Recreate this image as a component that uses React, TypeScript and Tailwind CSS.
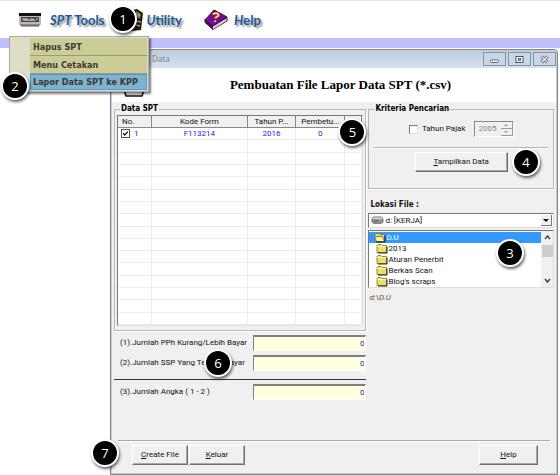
import { useState } from "react";
import type { ReactNode } from "react";

const rows = Array.from({ length: 15 }, (_, i) => i);

const folders = ["2013", "Aturan Penerbit", "Berkas Scan", "Blog's scraps"];

const totals = [
  { id: "pph", label: "(1).Jumlah PPh Kurang/Lebih Bayar", gap: "mb-1" },
  { id: "ssp", label: "(2).Jumlah SSP Yang Telah Dibayar", gap: "mb-2" },
  { id: "selisih", label: "(3).Jumlah Angka ( 1 - 2 )", gap: "mt-1" },
];

function Step({ n, className }: { n: number; className: string }) {
  return (
    <span
      className={`absolute z-20 flex h-7 w-7 items-center justify-center rounded-full border-2 border-white bg-black font-['Open_Sans',sans-serif] text-[13px] leading-none font-normal text-white shadow-[1px_2px_3px_rgba(0,0,0,0.6)] ${className}`}
    >
      {n}
    </span>
  );
}

function PushButton({ children, className }: { children: ReactNode; className: string }) {
  return (
    <button
      type="button"
      className={`h-5 border border-t-white border-l-white border-r-[#707070] border-b-[#707070] bg-[#f0f0f0] text-center shadow-[inset_-1px_-1px_0_#a8a8a8] ${className}`}
    >
      {children}
    </button>
  );
}

function Group({ title, className, children }: { title: string; className: string; children: ReactNode }) {
  return (
    <fieldset className={`relative min-w-0 border border-[#b8b8b8] px-0.5 shadow-[1px_1px_0_#fff] ${className}`}>
      <legend className="ml-[3px] px-px font-['DejaVu_Sans_Condensed','DejaVu_Sans',sans-serif] text-[8px] leading-3 font-bold text-black">
        {title}
      </legend>
      {children}
    </fieldset>
  );
}

function FolderIcon({ open }: { open?: boolean }) {
  return (
    <svg viewBox="0 0 12 11" className="h-[11px] w-3 shrink-0">
      <path d="M1 2.5 2 1.5h3l1 1h4.5v7H1z" fill="#e9df62" stroke="#77742d" strokeWidth=".8" />
      {open ? (
        <path d="M.5 4.5h8l2 5H2.5z" fill="#fff3a8" stroke="#6b682a" strokeWidth=".8" />
      ) : (
        <path d="M1.5 3.5h8.5" stroke="#fffbc0" />
      )}
      <path d="M11 3.5V10H2" fill="none" stroke="#222" />
    </svg>
  );
}

function DriveIcon() {
  return (
    <svg viewBox="0 0 13 8" className="h-2 w-[13px]">
      <path d="M2.5 1h8L12 3v3l-1.5 1.3h-8L1 6V3z" fill="#999" stroke="#555" strokeWidth=".8" />
      <path d="M2.5 1.5h8l1 1.5h-10z" fill="#ddd" />
      <path d="M3 5h5" stroke="#555" />
    </svg>
  );
}

function DriveBayIcon() {
  return (
    <svg viewBox="0 0 24 16" className="h-4 w-6">
      <path d="M1 1h22v3H1z" fill="#111" />
      <path d="M1 4h22v8H1z" fill="#bdb9b8" />
      <path d="M3 5h18v5H3z" fill="#4a4347" />
      <path d="M5 9c2-4 4-3 6-1 2-2 5-2 7 1z" fill="#b9a3b8" />
      <path d="M9 6l2 3M14 6l-2 3" stroke="#7fb39a" />
      <path d="M4 7h3M18 7h2" stroke="#d9d5d8" />
      <path d="M1 12h22l-2 2H3z" fill="#8a8588" />
      <path d="M3 14h18" stroke="#555" />
    </svg>
  );
}

function UtilityIcon() {
  return (
    <svg viewBox="0 0 20 24" className="h-6 w-5">
      <path d="M1 4l12-3 6 4-2 17-9 1-7-4z" fill="#1c1a18" />
      <path d="M12 3l5 3-1 5-4-2z" fill="#8a7a5b" />
      <path d="M14 6l2 2M12 13l5 1M12 17l4 1" stroke="#d8a542" strokeWidth="1.3" />
    </svg>
  );
}

function HelpBookIcon() {
  return (
    <svg viewBox="0 0 24 22" className="h-[22px] w-6">
      <path d="M1 13l8 7.5L23 12V8.5L9 17 1 10z" fill="#fff" stroke="#2a0a38" />
      <path d="M10 1l13 7L9 17 1 11z" fill="#7b0b8e" stroke="#3a0548" />
      <path d="M1 11v3l8 6.5V17z" fill="#4b0659" />
      <path d="M10 18.5L22 10.5M10 20l12-8" stroke="#999" strokeWidth=".7" />
      <path d="M9 5.5c1-2.2 6-1.4 5.500 1C14.2 8 11.6 7.4 11.5 9.5M11.2 11.5v1.6" fill="none" stroke="#f5e63c" strokeWidth="2" />
    </svg>
  );
}

function Toolbar() {
  const label =
    "font-['Lato',sans-serif] text-[13px] leading-4 font-bold text-[#1d5b96] [text-shadow:2px_2px_2px_rgba(0,0,0,0.45)]";
  return (
    <nav className="relative flex h-[38px] items-center border-t border-[#e6e6e6] bg-white pl-[18px]">
      <button type="button" className="flex items-center gap-2">
        <DriveBayIcon />
        <span className={label}>
          <i>SPT</i> Tools
        </span>
      </button>
      <button type="button" className="ml-5 flex items-center gap-0.5">
        <UtilityIcon />
        <span className={label}>
          <i>U</i>tility
        </span>
      </button>
      <button type="button" className="ml-[22px] flex items-center gap-1.5">
        <HelpBookIcon />
        <span className={label}>
          <i>H</i>elp
        </span>
      </button>
      <Step n={1} className="top-1 left-[109px]" />
      <div
        role="menu"
        className="absolute top-[35px] left-[9px] z-10 flex w-[140px] flex-col border border-[#aaa] bg-[#deddc5] p-px pl-5 text-left font-['DejaVu_Sans_Condensed','DejaVu_Sans',sans-serif] text-[9px] leading-4 font-bold text-[#3a3a30] shadow-[2px_2px_2px_rgba(0,0,0,0.5)]"
      >
        <button role="menuitem" type="button" className="h-[18px] border-b border-[#9b9b78] bg-[#cccc99] pl-[3px] text-left">
          Hapus SPT
        </button>
        <button role="menuitem" type="button" className="h-[18px] border-b border-[#9b9b78] bg-[#cccc99] pl-[3px] text-left">
          Menu Cetakan
        </button>
        <button role="menuitem" type="button" className="h-4 border border-[#4a98e0] bg-[#7fb2cd] pl-0.5 text-left leading-[14px] whitespace-nowrap">
          Lapor Data SPT ke KPP
        </button>
        <Step n={2} className="top-[35px] -left-[9px]" />
      </div>
    </nav>
  );
}

function TitleBar() {
  const box = "flex h-3.5 w-[23px] items-center justify-center border border-[#8394a8] bg-[#c9d6e4]";
  return (
    <header className="flex h-[18px] items-center bg-linear-to-b from-[#bfcddb] to-[#d5e2ef] pl-10 font-['Noto_Sans',sans-serif] text-[8px] text-[#7b858f]">
      <span className="flex-1">Data</span>
      <div className="flex gap-0.5">
        <button type="button" aria-label="Minimize" className={box}>
          <svg viewBox="0 0 9 9" className="h-[9px] w-[9px]">
            <rect x=".5" y="5" width="8" height="2.5" rx="1" fill="#fff" stroke="#4d5560" strokeWidth=".9" />
          </svg>
        </button>
        <button type="button" aria-label="Maximize" className={box}>
          <svg viewBox="0 0 9 9" className="h-[9px] w-[9px]">
            <rect x="1" y="1.5" width="7" height="6" fill="#fff" stroke="#4d5560" />
            <rect x="3.3" y="3.5" width="2.4" height="2" fill="#9aa" stroke="#4d5560" strokeWidth=".8" />
          </svg>
        </button>
        <button type="button" aria-label="Close" className={box}>
          <svg viewBox="0 0 9 9" className="h-[9px] w-[9px]">
            <path d="M1.5 1.5l6 6M7.5 1.5l-6 6" stroke="#4d5560" strokeWidth="3" />
            <path d="M1.5 1.5l6 6M7.5 1.5l-6 6" stroke="#fff" strokeWidth="1.2" />
          </svg>
        </button>
      </div>
    </header>
  );
}

function DataTable() {
  const th = "h-3 overflow-hidden border-r border-b border-[#888] bg-[#f0f0f0] p-0 font-normal whitespace-nowrap";
  const td = "h-3 border-r border-b border-[#ececec] p-0 text-center text-[#2222ee]";
  return (
    <Group title="Data SPT" className="pb-1">
      <div className="h-[211px] border border-[#777] border-r-[#e3e3e3] border-b-[#e3e3e3] bg-white">
        <table className="h-[209px] w-full table-fixed border-separate border-spacing-0 leading-[11px]">
          <thead>
            <tr>
              <th className={`w-[14%] text-left ${th}`}>
                <span className="pl-1">No.</span>
              </th>
              <th className={`w-[39%] ${th}`}>Kode Form</th>
              <th className={`w-[20%] ${th}`}>Tahun P...</th>
              <th className={`w-[20%] ${th}`}>Pembetu...</th>
              <th className={th}></th>
            </tr>
          </thead>
          <tbody>
            <tr>
              <td className={td}>
                <label className="flex items-center gap-1 pl-[3px]">
                  <input type="checkbox" defaultChecked className="peer sr-only" />
                  <svg viewBox="0 0 9 9" className="h-[9px] w-[9px] border border-[#555] bg-white">
                    <path d="M1.5 4l2 2.5L7.5 2" fill="none" stroke="#000" strokeWidth="1.6" />
                  </svg>
                  1
                </label>
              </td>
              <td className={td}>F113214</td>
              <td className={td}>2016</td>
              <td className={td}>0</td>
              <td className={td}></td>
            </tr>
            {rows.map((r) => (
              <tr key={r}>
                <td className={td}></td>
                <td className={td}></td>
                <td className={td}></td>
                <td className={td}></td>
                <td className={td}></td>
              </tr>
            ))}
          </tbody>
        </table>
      </div>
      <Step n={5} className="top-[3px] -right-px" />
    </Group>
  );
}

function Totals() {
  return (
    <div className="mt-1 flex flex-col">
      {totals.map((t, i) => (
        <div key={t.id} className={i === 2 ? "border-t border-[#333]" : ""}>
          <div className={`relative flex items-center pl-[6px] ${t.gap}`}>
            <label htmlFor={t.id} className="min-w-0 flex-1 whitespace-nowrap">
              {t.label}
            </label>
            <input
              id={t.id}
              defaultValue="0"
              className="h-4 w-[46%] shrink-0 border border-t-2 border-[#808080] border-r-white border-b-white bg-[#ffffdf] pr-px text-right text-[#2222ee]"
            />
            {i === 1 && <Step n={6} className="-top-1.5 left-[90px]" />}
          </div>
        </div>
      ))}
    </div>
  );
}

function SearchCriteria() {
  return (
    <Group title="Kriteria Pencarian" className="h-[86px]">
      <div className="mt-1.5 flex items-center justify-center">
        <input
          id="tahun"
          type="checkbox"
          className="h-[9px] w-[9px] appearance-none border border-[#777] border-r-[#ddd] border-b-[#ddd] bg-white checked:bg-[#555]"
        />
        <label htmlFor="tahun" className="ml-1 mr-2">
          Tahun Pajak
        </label>
        <div className="flex h-4 w-10 border border-[#888] border-r-white border-b-white">
          <input aria-label="Tahun" disabled defaultValue="2005" className="w-6 min-w-0 flex-1 pl-1 text-[#888]" />
          <div className="flex w-3 flex-col">
            <button type="button" aria-label="Naik" className="flex h-[7px] items-center justify-center border-r border-b border-[#999]">
              <svg viewBox="0 0 4 2" className="h-0.5 w-1 fill-[#999]"><path d="M0 2l2-2 2 2z" /></svg>
            </button>
            <button type="button" aria-label="Turun" className="flex h-[7px] items-center justify-center border-r border-b border-[#999]">
              <svg viewBox="0 0 4 2" className="h-0.5 w-1 fill-[#999]"><path d="M0 0l2 2 2-2z" /></svg>
            </button>
          </div>
        </div>
      </div>
      <hr className="mx-[3px] mt-2.5 mb-1 border-[#b5b5b5] shadow-[0_1px_0_#fff]" />
      <div className="flex justify-center">
        <PushButton className="w-[93px]">
          <u>T</u>ampilkan Data
        </PushButton>
      </div>
      <Step n={4} className="top-[33px] right-[13px]" />
    </Group>
  );
}

function FileLocation() {
  const [current, setCurrent] = useState("D.U");
  const item = "flex h-[11px] items-center leading-[11px] whitespace-nowrap";
  return (
    <div>
      <label
        htmlFor="drive"
        className="mt-2.5 mb-0.5 block pl-0.5 font-['DejaVu_Sans_Condensed','DejaVu_Sans',sans-serif] text-[8px] leading-3 font-bold"
      >
        Lokasi File :
      </label>
      <div className="relative">
        <select
          id="drive"
          className="h-[15px] w-full appearance-none border border-[#777] border-r-[#ddd] border-b-[#ddd] bg-white pl-4 text-[8px] leading-3"
        >
          <option>d: [KERJA]</option>
        </select>
        <span className="pointer-events-none absolute top-[3px] left-[3px]">
          <DriveIcon />
        </span>
        <span className="pointer-events-none absolute top-0.5 right-0.5 flex h-[11px] w-[11px] items-center justify-center border-r border-b border-[#777] bg-[#f0f0f0]">
          <svg viewBox="0 0 6 3" className="h-[3px] w-1.5"><path d="M0 0h6L3 3z" /></svg>
        </span>
      </div>
      <div className="relative mt-0.5 flex h-[58px] border border-[#777] border-r-[#ddd] border-b-[#ddd] bg-white">
        <ul role="listbox" aria-label="Folder" className="mt-px flex-1 overflow-hidden">
          <li
            role="option"
            aria-selected={current === "D.U"}
            onClick={() => setCurrent("D.U")}
            className={`${item} pl-[5px] ${current === "D.U" ? "bg-[#3399ff] text-white" : ""}`}
          >
            <FolderIcon open />
            D.U
          </li>
          {folders.map((f) => (
            <li
              key={f}
              role="option"
              aria-selected={current === f}
              onClick={() => setCurrent(f)}
              className={`${item} pl-[7px] ${current === f ? "bg-[#3399ff] text-white" : ""}`}
            >
              <FolderIcon />
              {f}
            </li>
          ))}
        </ul>
        <div className="flex w-3 flex-col items-center justify-between bg-[#f0f0f0] py-1">
          <svg viewBox="0 0 7 5" className="h-[5px] w-[7px]"><path d="M1 4l2.5-3L6 4" fill="none" stroke="#444" strokeWidth="1.5" /></svg>
          <span className="mb-4 h-3 w-[11px] bg-[#cdcdcd]" />
          <svg viewBox="0 0 7 5" className="h-[5px] w-[7px]"><path d="M1 1l2.5 3L6 1" fill="none" stroke="#444" strokeWidth="1.5" /></svg>
        </div>
        <Step n={3} className="top-2 right-[29px]" />
      </div>
      <p className="mt-1 pl-px leading-3 text-[#6b4a2a] italic">d:\D.U</p>
    </div>
  );
}

export default function App() {
  return (
    <div className="overflow-hidden bg-white font-['Roboto',sans-serif] text-[8px] leading-3 text-[#111]">
      <Toolbar />
      <div className="h-[10px] bg-[#c0c0ff]" />
      <main className="relative mt-px mr-0.5 mb-0.5 ml-[110px] rounded-t-sm border border-[#7f8791] bg-[#c3cedb] px-px pb-px">
        <TitleBar />
        <div className="flex h-[34px] items-center bg-white pl-[11px]">
          <svg viewBox="0 0 22 22" className="mt-1 h-[22px] w-[22px]">
            <path d="M5 3h12v8H5z" fill="#fff" stroke="#222" />
            <path d="M3 10h16l2 4-2 6H3l-2-6z" fill="#ddd" stroke="#111" strokeWidth="1.5" strokeLinejoin="round" />
            <path d="M5 16h12" stroke="#fff" strokeWidth="2" />
          </svg>
          <h1 className="flex-1 pr-5 text-center font-['Liberation_Serif',serif] text-[13px] leading-5 font-bold text-black">
            Pembuatan File Lapor Data SPT (*.csv)
          </h1>
        </div>
        <div className="bg-[#f0f0f0] px-0.5 pt-px pb-2">
          <div className="grid grid-cols-[253fr_186fr] gap-x-0.5">
            <div className="min-w-0">
              <DataTable />
              <Totals />
            </div>
            <div className="min-w-0">
              <SearchCriteria />
              <FileLocation />
            </div>
          </div>
          <div className="mx-1 mt-10 flex border-t border-[#aaa] pt-1 pr-3 pl-3.5 shadow-[inset_0_1px_0_#fff]">
            <PushButton className="w-14">
              <u>C</u>reate File
            </PushButton>
            <PushButton className="ml-px w-14">
              <u>K</u>eluar
            </PushButton>
            <PushButton className="ml-auto w-[59px]">
              <u>H</u>elp
            </PushButton>
          </div>
        </div>
        <Step n={7} className="bottom-[7px] -left-5" />
      </main>
    </div>
  );
}
